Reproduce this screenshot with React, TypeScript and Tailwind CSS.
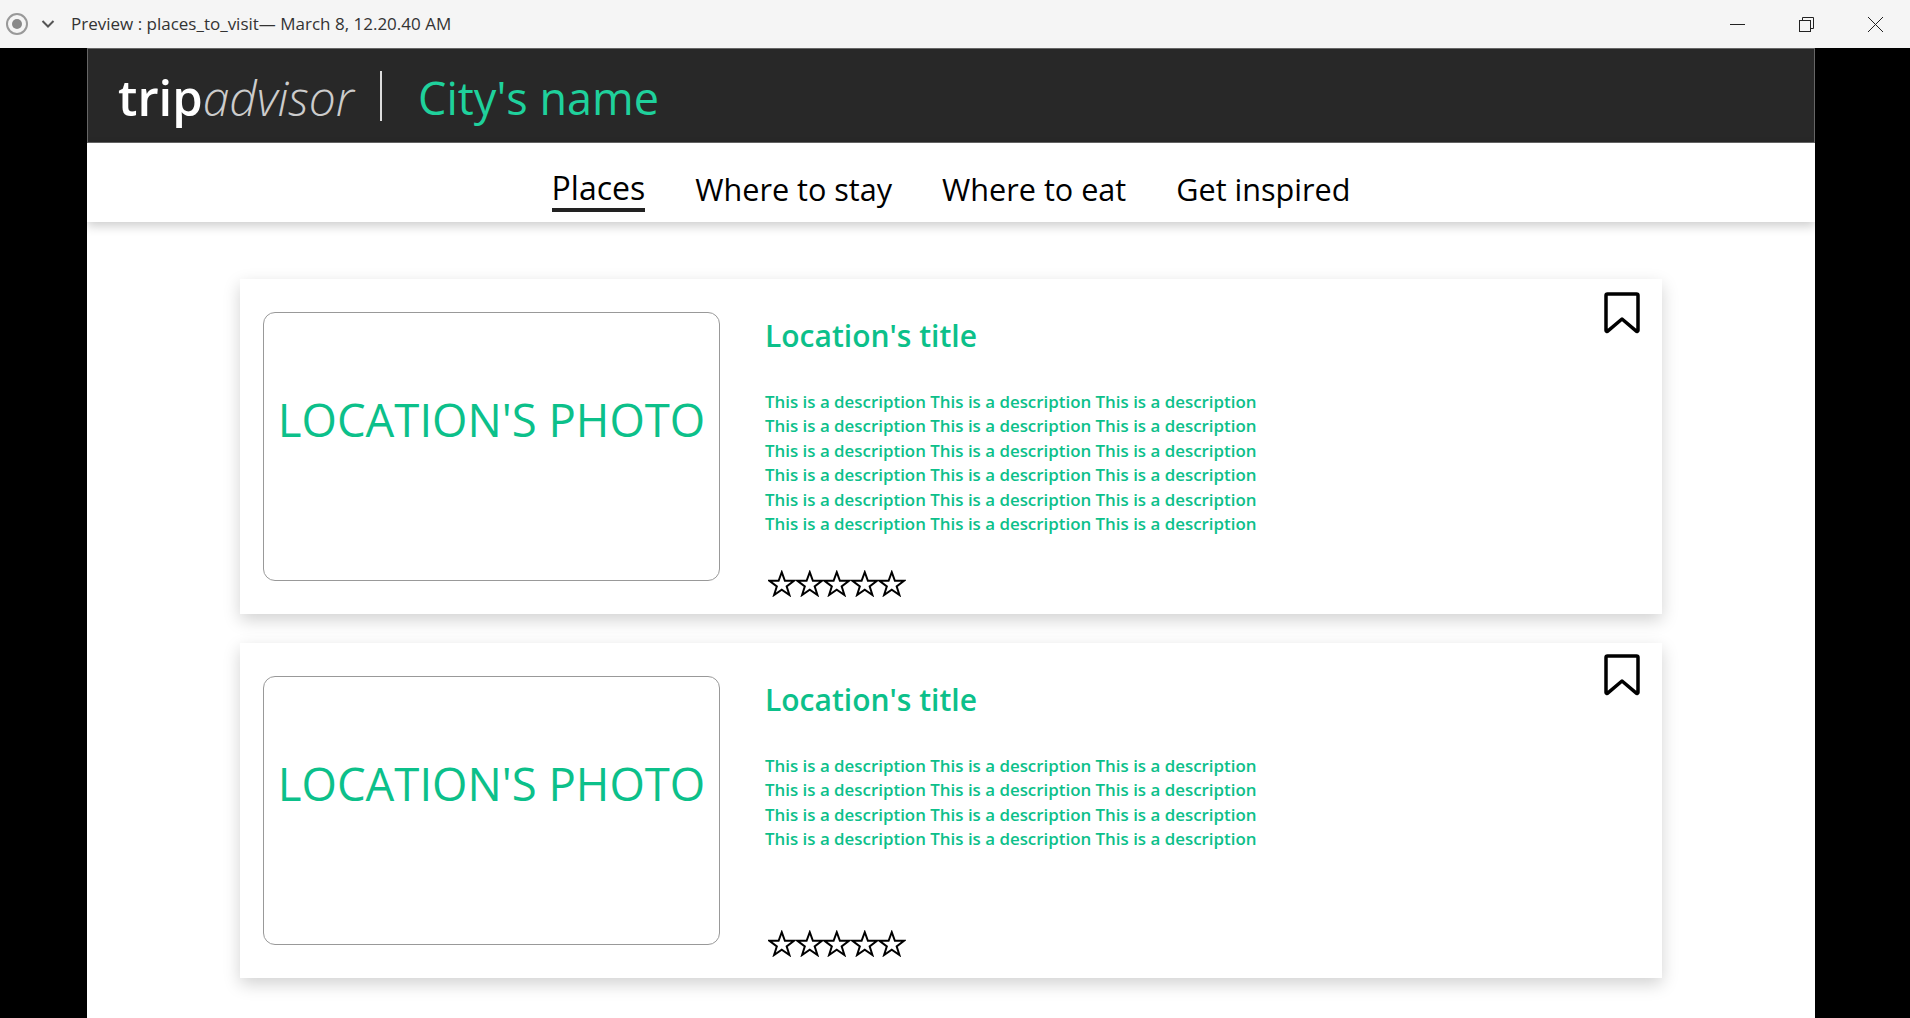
const green = "text-[#0cc08a]";

const descriptionLine = "This is a description This is a description This is a description";

const StarRow = () => (
  <div className="flex">
    {[0, 1, 2, 3, 4].map((i) => (
      <svg key={i} viewBox="0 0 28 27" className="h-[27px] w-[27.5px]" fill="none" stroke="#000" strokeWidth="2">
        <path d="M14 2l3.2 8.8h9.3l-7.5 5.6 2.8 8.8-7.8-5.4-7.8 5.4 2.8-8.8-7.5-5.6h9.3z" />
      </svg>
    ))}
  </div>
);

const BookmarkIcon = () => (
  <svg viewBox="0 0 36 42" className="h-[42px] w-[36px]" fill="none" stroke="#000" strokeWidth="3.5" strokeLinejoin="round" strokeLinecap="round">
    <path d="M3.5 2h29a1.5 1.5 0 0 1 1.5 1.5V38.5a1 1 0 0 1-1.7.7L18 27 3.7 39.2a1 1 0 0 1-1.7-.7V3.5A1.5 1.5 0 0 1 3.5 2z" />
  </svg>
);

type CardProps = {
  lines: number;
  starGap: string;
  bookmarkTop: string;
};

const LocationCard = ({ lines, starGap, bookmarkTop }: CardProps) => (
  <div className="relative flex h-[335px] w-[1422px] bg-white pl-[23px] pt-[33px] shadow-[0_6px_16px_rgba(0,0,0,0.18)]">
    <div className="flex h-[269px] w-[457px] justify-center rounded-[12px] border border-[#999] pt-[70px]">
      <p className={`text-[45.5px] leading-[72px] ${green}`}>LOCATION'S PHOTO</p>
    </div>
    <div className="ml-[45px] flex flex-col">
      <h2 className={`mt-[2px] text-[30px] font-semibold leading-[44px] ${green}`}>Location's title</h2>
      <div className={`mt-[32px] h-[146px] text-[16.9px] font-semibold leading-[24.4px] ${green}`}>
        {Array.from({ length: lines }).map((_, i) => (
          <p key={i}>{descriptionLine}</p>
        ))}
      </div>
      <div className={`ml-[3px] ${starGap}`}>
        <StarRow />
      </div>
    </div>
    <div className={`absolute right-[22px] ${bookmarkTop}`}>
      <BookmarkIcon />
    </div>
  </div>
);

export default function App() {
  return (
    <div className="flex h-[1018px] w-[1910px] flex-col overflow-hidden bg-black font-['Open_Sans',sans-serif]">
      {/* window title bar */}
      <div className="flex h-[48px] shrink-0 items-center bg-[#f5f5f5] pl-[6px] text-[#333]">
        <div className="flex h-[22px] w-[22px] items-center justify-center rounded-full border-2 border-[#999]">
          <div className="h-[10px] w-[10px] rounded-full bg-[#888]" />
        </div>
        <svg viewBox="0 0 14 8" className="ml-[13px] h-[8px] w-[14px]" fill="none" stroke="#555" strokeWidth="2">
          <path d="M1.5 1l5.5 5.5 5.5-5.5" />
        </svg>
        <span className="ml-[16px] text-[17px]">Preview : places_to_visit— March 8, 12.20.40 AM</span>
        <div className="ml-auto flex items-center gap-[54px] pr-[27px]">
          <svg viewBox="0 0 15 15" className="h-[15px] w-[15px]" fill="none" stroke="#222">
            <path d="M0 7.5h15" />
          </svg>
          <svg viewBox="0 0 15 15" className="h-[15px] w-[15px]" fill="none" stroke="#222">
            <path d="M3.5 3.5v-3h11v11h-3" />
            <rect x="0.5" y="3.5" width="11" height="11" />
          </svg>
          <svg viewBox="0 0 15 15" className="h-[15px] w-[15px]" fill="none" stroke="#222">
            <path d="M0 0l15 15M15 0L0 15" />
          </svg>
        </div>
      </div>

      <div className="ml-[87px] flex w-[1728px] flex-1 flex-col bg-white">
        {/* header */}
        <div className="flex h-[95px] shrink-0 items-center border border-[#666] bg-[#282828] pl-[30px] pt-[4px]">
          <span className="text-[49px] font-semibold text-white">trip</span>
          <span className="text-[48px] font-light italic text-[#ccc]">advisor</span>
          <div className="ml-[26px] h-[50px] w-[2px] -translate-y-[2px] bg-[#ddd]" />
          <span className="ml-[36px] text-[45px] text-[#1fd19c]">City's name</span>
        </div>

        {/* tabs */}
        <div className="relative flex h-[79px] shrink-0 items-start justify-center gap-[50px] pt-[22px] text-[30.6px] text-black shadow-[0_4px_10px_rgba(0,0,0,0.2)]">
          <span className="h-[47px] border-b-[4px] border-[#222] text-[32px] leading-[45px]">Places</span>
          <span className="leading-[48px]">Where to stay</span>
          <span className="leading-[48px]">Where to eat</span>
          <span className="leading-[48px]">Get inspired</span>
        </div>

        {/* cards */}
        <div className="flex flex-col gap-[29px] pl-[153px] pt-[57px]">
          <LocationCard lines={6} starGap="mt-[34px]" bookmarkTop="top-[13px]" />
          <LocationCard lines={4} starGap="mt-[30px]" bookmarkTop="top-[11px]" />
        </div>
      </div>
    </div>
  );
}
